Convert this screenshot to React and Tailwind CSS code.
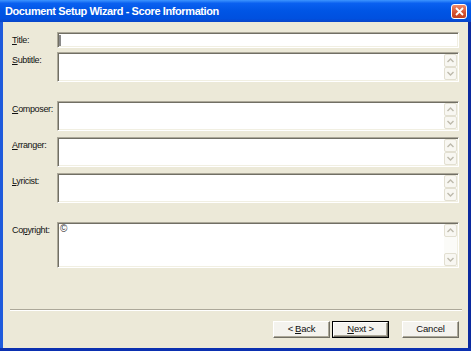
import React from 'react'

const font = { fontFamily: '"Liberation Sans", Arial, sans-serif' }

const Arrow = ({ up }) => (
  <div className="w-[13px] h-[13px] rounded-[2px] border border-[#E2DFD1] bg-[#F8F7F2] flex items-center justify-center">
    <svg width="7" height="5" viewBox="0 0 7 5">
      <path
        d={up ? 'M0.5 4 L3.5 1 L6.5 4' : 'M0.5 1 L3.5 4 L6.5 1'}
        fill="none"
        stroke="#BDBAAC"
        strokeWidth="1.4"
      />
    </svg>
  </div>
)

const Box = ({ h, children }) => (
  <div
    className={`flex-1 flex bg-white border border-t-[#ACA899] border-l-[#ACA899] border-b-white border-r-white shadow-[inset_1px_1px_0_#716F64,inset_-1px_-1px_0_#F1EFE2] ${h}`}
  >
    <div className="flex-1 pl-[2px] pt-[1px] text-[10px] leading-none text-[#333]">
      {children}
    </div>
    <div className="w-[13px] mr-[1px] my-[1px] flex flex-col justify-between bg-[#FBFBF8]">
      <Arrow up />
      <Arrow />
    </div>
  </div>
)

const Label = ({ pre, u, post }) => (
  <div className="w-[45px] shrink-0 pt-[3px] text-[9px] tracking-[-0.35px] leading-[10px] text-[#111]">
    {pre}
    <span className="underline underline-offset-1">{u}</span>
    {post}
  </div>
)

const Button = ({ children, def }) => (
  <div
    className={`h-[17px] w-[57px] ${def ? 'border border-black' : ''} flex`}
  >
    <div className="flex-1 flex items-center justify-center bg-[#F4F3EE] border border-t-white border-l-white border-r-[#716F64] border-b-[#716F64] shadow-[inset_-1px_-1px_0_#ACA899] text-[9.5px] tracking-[-0.2px] text-[#111]">
      {children}
    </div>
  </div>
)

export default function App() {
  return (
    <div className="w-[474px] h-[353px] bg-white" style={font}>
      <div className="w-[471px] h-[351px] flex flex-col">
        <div className="h-[22px] flex items-center justify-between pl-[5px] pr-[4px] bg-[linear-gradient(to_bottom,#3D95FF_0%,#0A60F0_15%,#0055E5_50%,#0050DF_85%,#0A45C8_100%)]">
          <span className="text-white font-bold text-[11px] tracking-[-0.4px]">
            Document Setup Wizard - Score Information
          </span>
          <div className="w-[16px] h-[15px] rounded-[3px] border border-white bg-[linear-gradient(to_bottom,#F08A6C,#D4512F_60%,#C2401F)] flex items-center justify-center">
            <svg width="9" height="9" viewBox="0 0 9 9">
              <path d="M1 1 L8 8 M8 1 L1 8" stroke="white" strokeWidth="1.8" />
            </svg>
          </div>
        </div>
        <div className="flex-1 flex">
          <div className="w-[3px] bg-[#1F5BDC]" />
          <div className="flex-1 bg-[#ECE9D8] flex flex-col pt-[10px] pl-[9px] pr-[9px]">
            <div className="flex">
              <div className="w-[45px] shrink-0 text-[9px] tracking-[-0.35px] leading-[16px] text-[#111]">
                <span className="underline underline-offset-1">T</span>itle:
              </div>
              <div className="flex-1 h-[16px] bg-white border border-t-[#ACA899] border-l-[#ACA899] border-b-white border-r-white shadow-[inset_1px_1px_0_#716F64,inset_-1px_-1px_0_#F1EFE2] flex items-center pl-[1px]">
                <div className="w-[2px] h-[11px] bg-[#8A8A8A]" />
              </div>
            </div>
            <div className="flex mt-[4px]">
              <Label u="S" post="ubtitle:" />
              <Box h="h-[30px]" />
            </div>
            <div className="flex mt-[19px]">
              <Label u="C" post="omposer:" />
              <Box h="h-[30px]" />
            </div>
            <div className="flex mt-[6px]">
              <Label u="A" post="rranger:" />
              <Box h="h-[30px]" />
            </div>
            <div className="flex mt-[6px]">
              <Label u="L" post="yricist:" />
              <Box h="h-[30px]" />
            </div>
            <div className="flex mt-[19px]">
              <Label pre="Co" u="p" post="yright:" />
              <Box h="h-[46px]">©</Box>
            </div>
            <div className="mt-[41px] ml-[-2px] mr-[-3px] h-[2px] border-t border-t-[#ACA899] border-b border-b-white" />
            <div className="mt-[10px] flex justify-end gap-[2px]">
              <Button>
                &lt; <span className="underline ml-[2px]">B</span>ack
              </Button>
              <Button def>
                <span className="underline">N</span>ext &gt;
              </Button>
              <div className="w-[9px]" />
              <Button>Cancel</Button>
            </div>
          </div>
          <div className="w-[3px] bg-[#0B2A9E]" />
        </div>
        <div className="h-[3px] bg-[#0B30B0]" />
      </div>
    </div>
  )
}
